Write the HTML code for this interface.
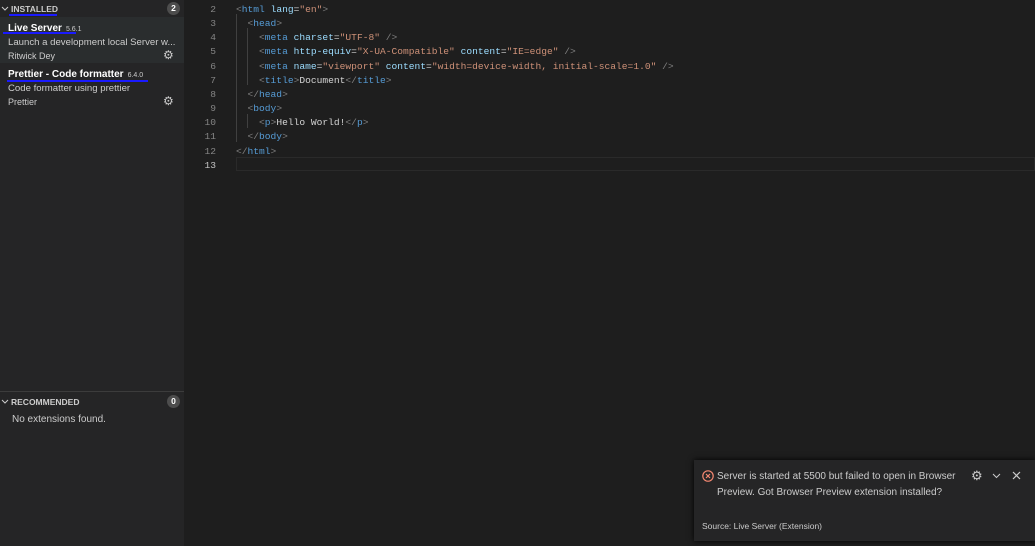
<!DOCTYPE html>
<html><head><style>
body{margin:0;width:1035px;height:546px;background:#1e1e1e;overflow:hidden;position:relative;font-family:"Liberation Sans",sans-serif;color:#ccc}
.side{position:absolute;left:0;top:0;width:184px;height:546px;background:#252526}
.hdr{position:absolute;left:0;width:184px;height:17px;font-size:8.5px;font-weight:bold;color:#ccc}
.hdr span.t{position:absolute;left:11px;top:4px}
.hdr svg{position:absolute;left:1px;top:6px}
.badge{position:absolute;right:4px;top:2px;width:13px;height:13px;border-radius:7px;background:#4d4d4d;color:#fff;font-size:8.5px;text-align:center;line-height:13px}
.item{position:absolute;left:0;width:184px;height:46px}
.item .n{position:absolute;left:8px;top:6px;font-size:10px;font-weight:bold;color:#fff}
.item .n small{font-size:7px;font-weight:normal;color:#ccc;margin-left:4px}
.item .d{position:absolute;left:8px;top:20px;font-size:9.6px;color:#ccc;white-space:nowrap}
.item .a{position:absolute;left:8px;top:34px;font-size:9px;color:#ccc}
.gear{position:absolute;left:163px;top:31px;font-size:12px;color:#ccc}
.u{position:absolute;height:1.5px;background:#1a1aff}
.code{position:absolute;left:190px;top:3px;font-family:"Liberation Mono",monospace;font-size:9.6px}
.ln{position:absolute;width:26px;text-align:right;color:#858585}
.l{position:absolute;left:46px;white-space:pre;color:#d4d4d4}
.tg{color:#569cd6}.br{color:#808080}.at{color:#9cdcfe}.st{color:#ce9178}
.notif{position:absolute;left:694px;top:460px;width:341px;height:81px;background:#252526;box-shadow:0 0 6px #000;font-size:10px;color:#ccc}
</style></head><body>
<div class="side">
<div class="hdr" style="top:0"><svg width="8" height="5"><path d="M1 1L4 4L7 1" stroke="#ccc" fill="none"/></svg><span class="t">INSTALLED</span><div class="badge">2</div></div>
<div class="u" style="left:9px;top:14px;width:48px"></div>
<div class="item" style="top:17px;background:#2a2d2e"><div class="n">Live Server<small>5.6.1</small></div><div class="d">Launch a development local Server w...</div><div class="a">Ritwick Dey</div><div class="gear">⚙</div></div>
<div class="u" style="left:3px;top:32px;width:73px"></div>
<div class="item" style="top:63px"><div class="n">Prettier - Code formatter<small>6.4.0</small></div><div class="d">Code formatter using prettier</div><div class="a">Prettier</div><div class="gear">⚙</div></div>
<div class="u" style="left:7px;top:80px;width:141px"></div>
<div style="position:absolute;left:0;top:391px;width:184px;height:1px;background:#3c3c3c"></div>
<div class="hdr" style="top:393px"><svg width="8" height="5"><path d="M1 1L4 4L7 1" stroke="#ccc" fill="none"/></svg><span class="t">RECOMMENDED</span><div class="badge">0</div></div>
<div style="position:absolute;left:12px;top:414px;font-size:10px">No extensions found.</div>
</div>
<div style="position:absolute;left:236px;top:157px;width:799px;height:14px;border:1px solid #2a2a2a;box-sizing:border-box"></div>
<div style="position:absolute;left:236px;top:14px;width:1px;height:128px;background:#404040"></div>
<div style="position:absolute;left:247px;top:28px;width:1px;height:57px;background:#404040"></div>
<div style="position:absolute;left:247px;top:114px;width:1px;height:14px;background:#404040"></div>
<div class="code">
<div class="ln" style="top:1px">2</div><div class="l" style="top:1px"><span class="br">&lt;</span><span class="tg">html</span> <span class="at">lang</span>=<span class="st">"en"</span><span class="br">&gt;</span></div>
<div class="ln" style="top:15px">3</div><div class="l" style="top:15px">  <span class="br">&lt;</span><span class="tg">head</span><span class="br">&gt;</span></div>
<div class="ln" style="top:29px">4</div><div class="l" style="top:29px">    <span class="br">&lt;</span><span class="tg">meta</span> <span class="at">charset</span>=<span class="st">"UTF-8"</span> <span class="br">/&gt;</span></div>
<div class="ln" style="top:43px">5</div><div class="l" style="top:43px">    <span class="br">&lt;</span><span class="tg">meta</span> <span class="at">http-equiv</span>=<span class="st">"X-UA-Compatible"</span> <span class="at">content</span>=<span class="st">"IE=edge"</span> <span class="br">/&gt;</span></div>
<div class="ln" style="top:58px">6</div><div class="l" style="top:58px">    <span class="br">&lt;</span><span class="tg">meta</span> <span class="at">name</span>=<span class="st">"viewport"</span> <span class="at">content</span>=<span class="st">"width=device-width, initial-scale=1.0"</span> <span class="br">/&gt;</span></div>
<div class="ln" style="top:72px">7</div><div class="l" style="top:72px">    <span class="br">&lt;</span><span class="tg">title</span><span class="br">&gt;</span>Document<span class="br">&lt;/</span><span class="tg">title</span><span class="br">&gt;</span></div>
<div class="ln" style="top:86px">8</div><div class="l" style="top:86px">  <span class="br">&lt;/</span><span class="tg">head</span><span class="br">&gt;</span></div>
<div class="ln" style="top:100px">9</div><div class="l" style="top:100px">  <span class="br">&lt;</span><span class="tg">body</span><span class="br">&gt;</span></div>
<div class="ln" style="top:114px">10</div><div class="l" style="top:114px">    <span class="br">&lt;</span><span class="tg">p</span><span class="br">&gt;</span>Hello World!<span class="br">&lt;/</span><span class="tg">p</span><span class="br">&gt;</span></div>
<div class="ln" style="top:128px">11</div><div class="l" style="top:128px">  <span class="br">&lt;/</span><span class="tg">body</span><span class="br">&gt;</span></div>
<div class="ln" style="top:143px">12</div><div class="l" style="top:143px"><span class="br">&lt;/</span><span class="tg">html</span><span class="br">&gt;</span></div>
<div class="ln" style="top:157px;color:#c6c6c6">13</div>
</div>
<div class="notif">
<svg style="position:absolute;left:8px;top:10px" width="12" height="12" viewBox="0 0 12 12"><circle cx="6" cy="6" r="5.2" fill="none" stroke="#f48771" stroke-width="1.2"/><path d="M4 4L8 8M8 4L4 8" stroke="#f48771" stroke-width="1.2"/></svg>
<div style="position:absolute;left:23px;top:9px;line-height:16px;width:240px">Server is started at 5500 but failed to open in Browser Preview. Got Browser Preview extension installed?</div>
<div style="position:absolute;left:277px;top:8px;font-size:13px">⚙</div>
<svg style="position:absolute;left:298px;top:13px" width="9" height="6"><path d="M1 1L4.5 4.5L8 1" stroke="#ccc" fill="none"/></svg>
<svg style="position:absolute;left:318px;top:11px" width="9" height="9"><path d="M1 1L8 8M8 1L1 8" stroke="#ccc" stroke-width="1.2"/></svg>
<div style="position:absolute;left:8px;top:61px;font-size:8.5px">Source: Live Server (Extension)</div>
</div>
</body></html>
